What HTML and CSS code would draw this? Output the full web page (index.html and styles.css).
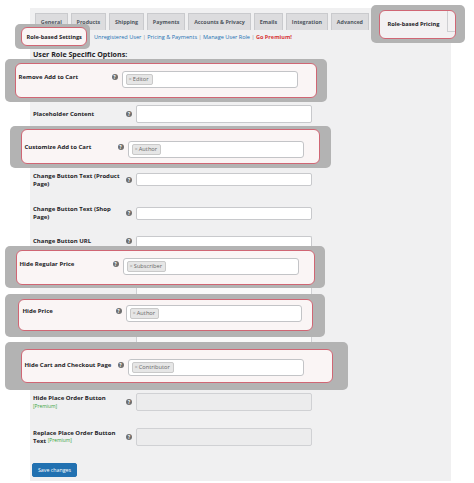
FILE: index.html
```html
<!DOCTYPE html>
<html lang="en">
<head>
<meta charset="utf-8">
<title>Role-based Pricing settings</title>
<link rel="stylesheet" href="styles.css">
</head>
<body>
<div class="panel">
  <nav class="tabs">
    <a class="tab">General</a>
    <a class="tab">Products</a>
    <a class="tab">Shipping</a>
    <a class="tab">Payments</a>
    <a class="tab">Accounts &amp; Privacy</a>
    <a class="tab">Emails</a>
    <a class="tab">Integration</a>
    <a class="tab">Advanced</a>
    <div class="hl hl-tab">
      <div class="hl-in">
        <span class="tab-active">Role-based Pricing</span>
        <span class="tab-rest"></span>
      </div>
    </div>
  </nav>

  <div class="subnav">
    <div class="hl hl-sub"><div class="hl-in">Role-based Settings</div></div>
    <div class="links">
      <a class="lnk">Unregistered User</a> <span class="sep">|</span>
      <a class="lnk">Pricing &amp; Payments</a> <span class="sep">|</span>
      <a class="lnk">Manage User Role</a> <span class="sep">|</span>
      <a class="go">Go Premium!</a>
    </div>
  </div>

  <h2 class="section-title">User Role Specific Options:</h2>

  <div class="form">
    <div class="hl co co-remove">
      <div class="hl-in">
        <span class="lbl">Remove Add to Cart</span>
        <span class="help">?</span>
        <div class="select"><span class="tag"><span class="x">×</span>Editor</span></div>
      </div>
    </div>

    <div class="row r-ph">
      <span class="lbl">Placeholder Content</span>
      <span class="help">?</span>
      <div class="input tall"></div>
    </div>

    <div class="hl co co-custom">
      <div class="hl-in">
        <span class="lbl">Customize Add to Cart</span>
        <span class="help">?</span>
        <div class="select"><span class="tag"><span class="x">×</span>Author</span></div>
      </div>
    </div>

    <div class="row r-prod">
      <span class="lbl">Change Button Text (Product<br>Page)</span>
      <span class="help">?</span>
      <div class="input"></div>
    </div>

    <div class="row r-shop">
      <span class="lbl">Change Button Text (Shop<br>Page)</span>
      <span class="help">?</span>
      <div class="input"></div>
    </div>

    <div class="row r-url">
      <span class="lbl">Change Button URL</span>
      <span class="help">?</span>
      <div class="input cut"></div>
    </div>

    <div class="hl co co-regular">
      <div class="hl-in">
        <span class="lbl">Hide Regular Price</span>
        <span class="help">?</span>
        <div class="select"><span class="tag"><span class="x">×</span>Subscriber</span></div>
      </div>
    </div>

    <div class="peek p6"></div>

    <div class="hl co co-price">
      <div class="hl-in">
        <span class="lbl">Hide Price</span>
        <span class="help">?</span>
        <div class="select"><span class="tag"><span class="x">×</span>Author</span></div>
      </div>
    </div>

    <div class="peek p5"></div>

    <div class="hl co co-cart">
      <div class="hl-in">
        <span class="lbl">Hide Cart and Checkout Page</span>
        <span class="help">?</span>
        <div class="select"><span class="tag"><span class="x">×</span>Contributor</span></div>
      </div>
    </div>

    <div class="row r-hpo">
      <span class="lbl">Hide Place Order Button<br><span class="prem">[Premium]</span></span>
      <span class="help">?</span>
      <div class="input dis"></div>
    </div>

    <div class="row r-rpo">
      <span class="lbl">Replace Place Order Button<br>Text <span class="prem up">[Premium]</span></span>
      <span class="help">?</span>
      <div class="input dis"></div>
    </div>

    <div class="save-row">
      <button class="save" type="button">Save changes</button>
    </div>
  </div>
</div>
</body>
</html>
```

FILE: styles.css
```css
* { box-sizing: border-box; }

body {
  margin: 0;
  background: #ffffff;
  font-family: "Open Sans", "Noto Sans", sans-serif;
  color: #1d2327;
}

.panel {
  margin: 8px 0 0 30px;
  width: 421px;
  height: 473px;
  background: #f0f0f1;
  padding: 5px 0 0 3px;
}

/* ---------- tabs ---------- */
.tabs {
  display: flex;
  align-items: flex-start;
  gap: 3.2px;
  padding-left: 2px;
  height: 17px;
}

.tab {
  height: 17px;
  padding: 0 4.8px;
  background: #dcdcde;
  border: 1px solid #c9cacd;
  border-bottom: none;
  font-size: 5.35px;
  font-weight: 700;
  line-height: 16px;
  color: #50575e;
  white-space: nowrap;
  flex: none;
}

/* ---------- highlight callouts ---------- */
.hl {
  background: #b3b3b3;
  border-radius: 5px;
  flex: none;
}

.hl-in {
  border: 1.5px solid #d06674;
  background: #faf5f5;
  border-radius: 6px;
}

.hl-tab {
  width: 94px;
  height: 38px;
  margin-top: -8px;
  margin-left: -1px;
  padding: 5px 9px 4px 8px;
}

.hl-tab .hl-in {
  height: 100%;
  display: flex;
  overflow: hidden;
  background: #f3f1f2;
}

.tab-active {
  width: 68px;
  padding-left: 7.5px;
  font-size: 5.7px;
  font-weight: 700;
  line-height: 26px;
  color: #1d2327;
  white-space: nowrap;
  border-right: 1px solid #cfcfd2;
  height: 21px;
}

.tab-rest {
  flex: 1;
  height: 21px;
  border-bottom: 1px solid #cfcfd2;
}

/* ---------- sub navigation ---------- */
.subnav {
  display: flex;
  align-items: center;
  margin-top: -6px;
  height: 25px;
}

.hl-sub {
  margin-left: -18px;
  width: 75px;
  height: 25px;
  padding: 3px 3px 3px 6px;
}

.hl-sub .hl-in {
  height: 100%;
  display: flex;
  align-items: center;
  padding-left: 4.5px;
  font-size: 5.7px;
  font-weight: 700;
  white-space: nowrap;
}

.links {
  margin-left: 4px;
  font-size: 5.55px;
  white-space: nowrap;
}

.lnk { color: #2271b1; }
.sep { color: #8c8f94; }
.go { color: #d63638; font-weight: 700; }

.section-title {
  margin: 0;
  height: 10px;
  font-size: 7.1px;
  line-height: 10px;
  font-weight: 700;
}

/* ---------- form rows ---------- */
.lbl {
  width: 93px;
  flex: none;
  font-size: 6px;
  font-weight: 700;
  line-height: 8px;
  color: #1d2327;
}

.help {
  width: 6px;
  height: 6px;
  flex: none;
  border-radius: 50%;
  background: #6e6e6e;
  color: #ffffff;
  font-size: 4.4px;
  font-weight: 700;
  line-height: 6px;
  text-align: center;
}

.input {
  width: 176px;
  height: 13px;
  flex: none;
  margin-left: 4px;
  background: #ffffff;
  border: 1px solid #c8c9cc;
  border-radius: 2px;
}

.input.tall { height: 18px; }
.input.dis { height: 18px; background: #ececed; border-color: #d0d1d4; }
.input.cut { height: 10px; border-bottom: none; border-radius: 2px 2px 0 0; }

.row {
  display: flex;
  align-items: center;
}

.r-ph   { padding: 3px 0; }
.r-prod { margin-top: 3.5px; }
.r-shop { margin-top: 17.5px; }
.r-url  { margin-top: 15px; }
.r-hpo  { margin-top: 3px; }
.r-rpo  { margin-top: 17px; }

.prem {
  color: #3aa53a;
  font-size: 4.9px;
  font-weight: 400;
}
.prem.up { position: relative; top: -1.5px; }

.select {
  width: 176px;
  height: 17px;
  flex: none;
  margin-left: 4px;
  background: #ffffff;
  border: 1px solid #c3c4c7;
  border-radius: 3px;
  padding: 2px 0 0 3px;
  display: flex;
  align-items: flex-start;
}

.tag {
  height: 11px;
  padding: 0 3px 0 2px;
  background: #e6e6e6;
  border: 1px solid #c9c9c9;
  border-radius: 2px;
  font-size: 5.7px;
  line-height: 9px;
  color: #666666;
  white-space: nowrap;
}

.tag .x { color: #9a9a9a; margin-right: 1px; }

/* callout geometry */
.co {
  margin-left: var(--x);
  width: var(--w);
  height: var(--h);
  padding: var(--t) 0 0 var(--l);
}

.co .hl-in {
  width: var(--iw);
  height: var(--ih);
  display: flex;
  align-items: flex-start;
  padding: var(--pt) 0 0 var(--pl);
}

.co .lbl { margin-top: 2px; }
.co .help { margin-top: 3px; }

.co-remove  { --x: -28px; --w: 322px; --h: 43px; --t: 4px; --l: 10px; --iw: 302px; --ih: 35px; --pt: 6.5px;  --pl: 2.5px; }
.co-custom  { --x: -23px; --w: 321px; --h: 42px; --t: 3px; --l: 11px; --iw: 299px; --ih: 35px; --pt: 10.5px; --pl: 2.5px; }
.co-regular { --x: -28px; --w: 320px; --h: 42px; --t: 4px; --l: 11px; --iw: 299px; --ih: 35px; --pt: 6.5px;  --pl: 2.5px; }
.co-price   { --x: -28px; --w: 320px; --h: 43px; --t: 5px; --l: 13px; --iw: 295px; --ih: 32px; --pt: 4.5px;  --pl: 3.5px; }
.co-cart    { --x: -28px; --w: 343px; --h: 48px; --t: 7px; --l: 16px; --iw: 312px; --ih: 34px; --pt: 8.5px;  --pl: 2.5px; }

/* underlying inputs peeking between callouts */
.peek {
  margin-left: 103px;
  width: 176px;
  background: #fafafa;
  border-left: 1px solid #d0d1d4;
  border-right: 1px solid #d0d1d4;
}
.p6 { height: 6px; }
.p5 { height: 5px; }

.save-row {
  display: flex;
  margin-top: 17px;
}

.save {
  margin-left: -1px;
  width: 45px;
  height: 14px;
  padding: 0;
  background: #2271b1;
  border: 1px solid #2271b1;
  border-radius: 2px;
  color: #ffffff;
  font-family: "Open Sans", "Noto Sans", sans-serif;
  font-size: 5.3px;
  line-height: 12px;
}
```
